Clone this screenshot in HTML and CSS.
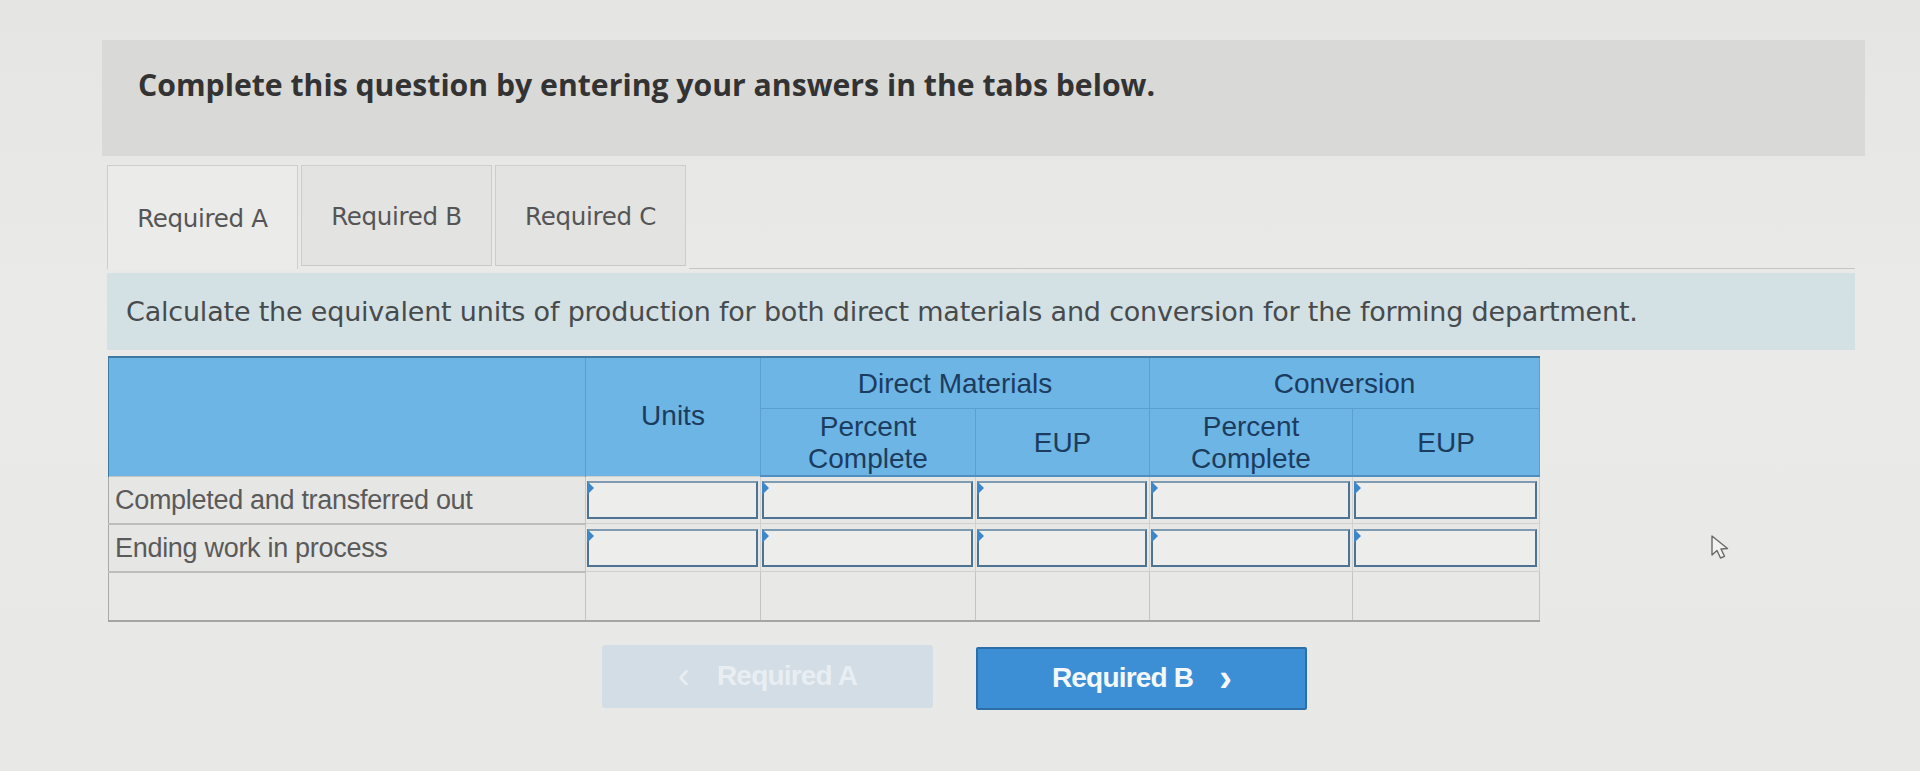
FILE: index.html
```html
<!DOCTYPE html>
<html>
<head>
<meta charset="utf-8">
<title>Equivalent units</title>
<link rel="stylesheet" href="styles.css">
</head>
<body>
<div class="page">
  <div class="prompt">Complete this question by entering your answers in the tabs below.</div>
  <div class="tabs">
    <div class="tab active">Required A</div>
    <div class="tab">Required B</div>
    <div class="tab">Required C</div>
    <div class="tab-rest"></div>
  </div>
  <div class="instr">Calculate the equivalent units of production for both direct materials and conversion for the forming department.</div>
  <table class="eup">
    <colgroup>
      <col class="c-label"><col class="c-units"><col class="c-dmp"><col class="c-dme"><col class="c-cvp"><col class="c-cve">
    </colgroup>
    <thead>
      <tr class="h1">
        <th rowspan="2" class="blank"></th>
        <th rowspan="2" class="units">Units</th>
        <th colspan="2" class="grp">Direct Materials</th>
        <th colspan="2" class="grp">Conversion</th>
      </tr>
      <tr class="h2">
        <th>Percent<br>Complete</th>
        <th>EUP</th>
        <th>Percent<br>Complete</th>
        <th>EUP</th>
      </tr>
    </thead>
    <tbody>
      <tr class="r-in">
        <td class="label">Completed and transferred out</td>
        <td class="in"><div class="box"><span class="tri"></span></div></td>
        <td class="in"><div class="box"><span class="tri"></span></div></td>
        <td class="in"><div class="box"><span class="tri"></span></div></td>
        <td class="in"><div class="box"><span class="tri"></span></div></td>
        <td class="in"><div class="box"><span class="tri"></span></div></td>
      </tr>
      <tr class="r-in">
        <td class="label">Ending work in process</td>
        <td class="in"><div class="box"><span class="tri"></span></div></td>
        <td class="in"><div class="box"><span class="tri"></span></div></td>
        <td class="in"><div class="box"><span class="tri"></span></div></td>
        <td class="in"><div class="box"><span class="tri"></span></div></td>
        <td class="in"><div class="box"><span class="tri"></span></div></td>
      </tr>
      <tr class="r-empty">
        <td class="label"></td>
        <td></td><td></td><td></td><td></td><td></td>
      </tr>
    </tbody>
  </table>
  <div class="nav">
    <div class="btn prev"><span class="chev">&lsaquo;</span>Required A</div>
    <div class="btn next">Required B<span class="chev">&rsaquo;</span></div>
  </div>
</div>
<svg class="cursor" width="24" height="28" viewBox="0 0 24 28">
  <path d="M2 2 L2 21 L7 16.5 L10.5 24 L14.5 22.3 L11 15 L17.5 14.5 Z" fill="#f2f2f0" stroke="#6a6a6a" stroke-width="1.4" stroke-linejoin="round"/>
</svg>
</body>
</html>
```
FILE: styles.css
```css
html, body {
  margin: 0;
  padding: 0;
}
body {
  width: 1920px;
  height: 771px;
  overflow: hidden;
  background: linear-gradient(180deg, #e5e5e3 0%, #eaeae8 40%, #e8e8e6 100%);
  position: relative;
  font-family: "Liberation Sans", Arial, sans-serif;
}
.page {
  padding-top: 40px;
  padding-left: 102px;
  width: 1763px;
}
.prompt {
  height: 116px;
  background: #d9d9d8;
  box-sizing: border-box;
  padding: 24px 0 0 36px;
  font-family: "Open Sans", sans-serif;
  font-weight: 700;
  font-size: 30.2px;
  color: #333;
}
.tabs {
  display: flex;
  margin: 9px 0 0 5px;
  width: 1748px;
  height: 104px;
  gap: 3px;
}
.tab {
  width: 191px;
  height: 101px;
  box-sizing: border-box;
  border: 1px solid #cdcdcc;
  border-bottom: none;
  background: #e3e3e2;
  display: flex;
  align-items: center;
  justify-content: center;
  font-family: "DejaVu Sans", sans-serif;
  font-size: 24.5px;
  letter-spacing: -0.3px;
  color: #555;
  padding-top: 2px;
}
.tab.active {
  background: #ebebea;
  height: 104px;
}
.tab-rest {
  flex: 1;
  border-bottom: 1px solid #c4c6c6;
}
.tab + .tab {
  border-bottom: 1px solid #c8c8c8;
}
.instr {
  margin: 4px 0 0 5px;
  width: 1748px;
  height: 77px;
  box-sizing: border-box;
  background: #d4e1e4;
  display: flex;
  align-items: center;
  padding: 0 0 0 19px;
  font-family: "DejaVu Sans", sans-serif;
  font-size: 27px;
  letter-spacing: -0.2px;
  color: #474b4d;
}
.eup {
  margin: 6px 0 0 6px;
  border-collapse: collapse;
  table-layout: fixed;
  width: 1431px;
}
.c-label { width: 477px; }
.c-units { width: 175px; }
.c-dmp { width: 215px; }
.c-dme { width: 174px; }
.c-cvp { width: 203px; }
.c-cve { width: 187px; }
.eup thead th {
  background: #6db5e5;
  color: #1c3c5e;
  font-weight: 400;
  font-size: 28px;
  line-height: 32px;
  padding: 0;
  border-left: 1px solid #5b9fcf;
  border-right: 1px solid #5b9fcf;
}
.eup thead tr.h1 th {
  border-top: 2px solid #3f79a3;
}
.eup .h1 th { height: 48px; }
.eup .h1 th.grp { border-bottom: 1px solid #5a9fcf; padding-top: 2px; }
.eup .h2 th { height: 62px; padding-top: 2px; }
.eup th.blank { border-left: 1px solid #3f79a3; }
.eup th.units { vertical-align: top; padding-top: 42px; }
.eup thead tr.h2 th { border-bottom: 2px solid #4f8fbf; }
.eup td {
  padding: 0;
  height: 42px;
  background: #e9e9e8;
  border: 1px solid #c4c4c4;
}
.eup td.label {
  background: #e6e6e5;
  font-size: 27px;
  line-height: 30px;
  color: #5a5a5a;
  padding-left: 6px;
  border-left: 1px solid #a9a9a9;
  border-bottom: 2px solid #bdbdbd;
  vertical-align: middle;
  letter-spacing: -0.3px;
  white-space: nowrap;
}
.eup tr.r-in + tr.r-in td { height: 43px; }
.eup tr.r-empty td {
  height: 47px;
  background: #e8e8e7;
  border-bottom: 2px solid #a5a5a5;
}
.eup td.in {
  padding: 2px 2px 2px 1px;
  border-color: #d0d0d0;
  background: #e7e7e6;
}
.box {
  position: relative;
  height: 38px;
  box-sizing: border-box;
  border: 2px solid #4c7391;
  border-top-color: #7f9bb1;
  background: #ededec;
}
.tri {
  position: absolute;
  left: -2px;
  top: -2px;
  width: 0;
  height: 0;
  border-top: 7px solid transparent;
  border-bottom: 7px solid transparent;
  border-left: 7px solid #3d87c8;
}
.nav {
  display: flex;
  gap: 43px;
  margin: 23px 0 0 500px;
}
.btn {
  width: 331px;
  height: 63px;
  box-sizing: border-box;
  display: flex;
  align-items: center;
  justify-content: center;
  font-weight: 700;
  font-size: 28px;
  letter-spacing: -0.8px;
}
.btn.prev {
  background: #d3dde5;
  color: #e9eef2;
  border-radius: 3px;
}
.btn.prev .chev {
  margin-right: 28px;
  font-weight: 400;
  font-size: 36px;
}
.btn.next {
  margin-top: 2px;
  background: #3d8fd5;
  color: #f4f8fb;
  border: 2px solid #2c6ea8;
  border-radius: 2px;
}
.btn.next .chev {
  margin-left: 26px;
  font-size: 38px;
  font-weight: 700;
}
.cursor {
  position: absolute;
  left: 1710px;
  top: 534px;
}
```
